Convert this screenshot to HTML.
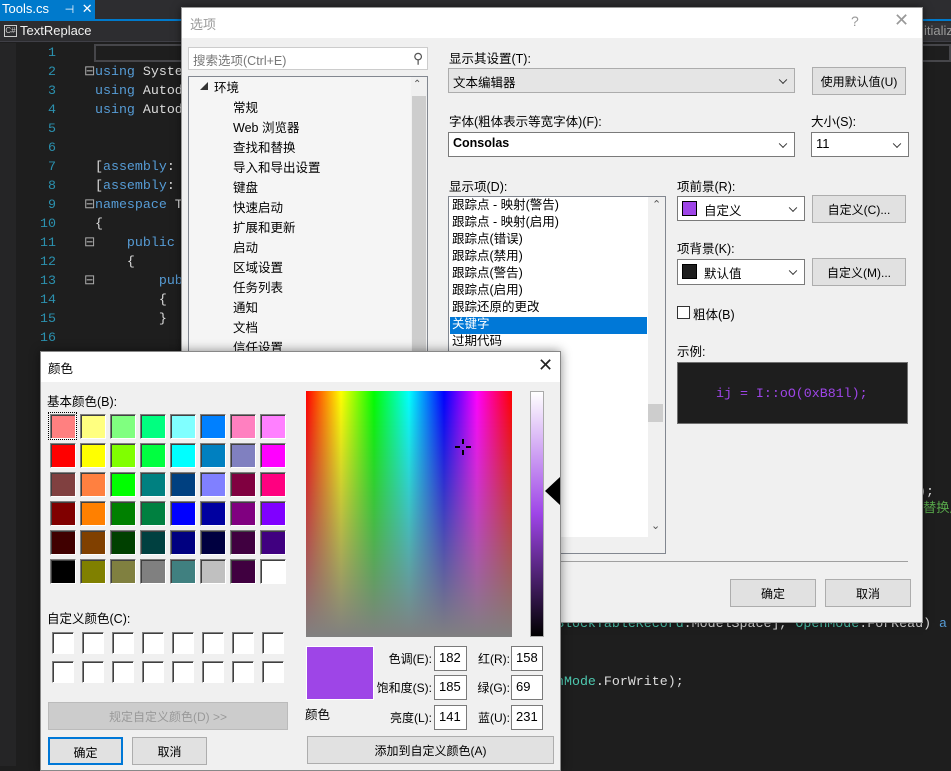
<!DOCTYPE html>
<html><head><meta charset="utf-8">
<style>
*{margin:0;padding:0;box-sizing:border-box}
body{width:951px;height:766px;overflow:hidden;background:#1e1e1e;position:relative;font-family:"Liberation Sans","Noto Sans CJK SC",sans-serif;font-size:12px;color:#000}
.a{position:absolute;white-space:nowrap}
.code{font-family:"Liberation Mono","Noto Sans CJK SC",monospace;font-size:13.3px;color:#dcdcdc;line-height:19px;white-space:pre}
.ln{color:#2b91af;text-align:right;width:40px;left:16px}
.kw{color:#569cd6}.ty{color:#4ec9b0}.gr{color:#57a64a}
.btn{position:absolute;background:#e1e1e1;border:1px solid #adadad;text-align:center;font-size:12px}
.cb{position:absolute;background:#fff;border:1px solid #7a7a7a}
.chev{position:absolute;right:8px;top:50%;width:6px;height:6px;border-right:1px solid #333;border-bottom:1px solid #333;transform:translateY(-70%) rotate(45deg)}
.sw{position:absolute;width:26px;height:25px;border:1px solid #fff;border-top-color:#808080;border-left-color:#808080;box-shadow:inset 1px 1px 0 #404040}
.lab{position:absolute;text-align:right;font-size:12px}
.inp{position:absolute;background:#fff;border:1px solid #7a7a7a;width:33px;height:25px;font-size:13px;padding:3px 0 0 4px}
</style></head><body>
<div class="a" style="left:0;top:0;width:951px;height:20px;background:#2d2d30"></div>
<div class="a" style="left:0;top:0;width:95px;height:20px;background:#007acc;color:#fff;font-size:13px;padding:1px 0 0 2px">Tools.cs <span style="margin-left:12px;font-size:11px">⊣</span> <span style="margin-left:4px">✕</span></div>
<div class="a" style="left:0;top:19px;width:951px;height:2px;background:#007acc"></div>
<div class="a" style="left:0;top:21px;width:951px;height:21px;background:#2d2d30;border-bottom:1px solid #3f3f46"></div>
<div class="a" style="left:4px;top:25px;width:13px;height:12px;border:1px solid #ccc;font-size:8px;color:#ccc;line-height:10px;text-align:center">C#</div>
<div class="a" style="left:20px;top:23px;color:#f1f1f1;font-size:13px">TextReplace</div>
<div class="a" style="left:900px;top:23px;width:51px;height:18px;background:#333337;color:#999;font-size:13px;padding-left:24px">itializ</div>
<div class="a" style="left:0;top:43px;width:16px;height:723px;background:#252526"></div>
<div class="a" style="left:94px;top:44px;width:857px;height:18px;border:2px solid #46464a"></div>
<div class="a code ln" style="top:43px">1
2
3
4
5
6
7
8
9
10
11
12
13
14
15
16</div>
<div class="a code" style="left:84px;top:43px;color:#aaa"> 
⊟






⊟

⊟

⊟</div>
<div class="a code" style="left:95px;top:43px"> 
<span class="kw">using</span> System
<span class="kw">using</span> Autod
<span class="kw">using</span> Autod


[<span class="kw">assembly</span>: 
[<span class="kw">assembly</span>: 
<span class="kw">namespace</span> T
{
    <span class="kw">public</span>
    {
        <span class="kw">pub</span>
        {
        }</div>
<div class="a code" style="left:918px;top:482px">);</div>
<div class="a code gr" style="left:923px;top:499px">替换后</div>
<div class="a code" style="left:556px;top:614px"><span class="ty">BlockTableRecord</span>.ModelSpace], <span class="ty">OpenMode</span>.ForRead) <span class="kw">a</span></div>
<div class="a code" style="left:556px;top:672px"><span class="ty">nMode</span>.ForWrite);</div>

<div class="a" style="left:181px;top:7px;width:742px;height:616px;background:#f0f0f0;border:1px solid #999;box-shadow:0 0 8px rgba(0,0,0,.5)"></div>
<div class="a" style="left:182px;top:8px;width:740px;height:30px;background:#fff"></div>
<div class="a" style="left:190px;top:14px;color:#999;font-size:13px">选项</div>
<div class="a" style="left:851px;top:13px;color:#999;font-size:14px">?</div>
<div class="a" style="left:894px;top:10px;color:#999;font-size:18px">✕</div>
<div class="a" style="left:188px;top:47px;width:240px;height:23px;background:#fff;border:1px solid #ccc;color:#777;padding:2px 0 0 4px;font-size:12.5px">搜索选项(Ctrl+E)</div>
<div class="a" style="left:413px;top:50px;font-size:14px;color:#555">⚲</div>
<div class="a" style="left:188px;top:76px;width:240px;height:290px;background:#f5f5f5;border:1px solid #828790"></div>
<div class="a" style="left:411px;top:77px;width:16px;height:290px;background:#f0f0f0"></div>
<div class="a" style="left:412px;top:96px;width:14px;height:270px;background:#cdcdcd"></div>
<div class="a" style="left:413px;top:79px;font-size:10px;color:#555">⌃</div>
<div class="a" style="left:200px;top:81px;font-size:8px;color:#333">◢</div>
<div class="a" style="left:214px;top:78px;font-size:12.5px;line-height:20px">环境</div>
<div class="a" style="left:233px;top:98px;font-size:12.5px;line-height:20px">常规<br>Web 浏览器<br>查找和替换<br>导入和导出设置<br>键盘<br>快速启动<br>扩展和更新<br>启动<br>区域设置<br>任务列表<br>通知<br>文档<br>信任设置</div>

<div class="a" style="left:449px;top:48px;font-size:12.5px">显示其设置(T):</div>
<div class="a" style="left:448px;top:68px;width:347px;height:25px;background:#e5e5e5;border:1px solid #acacac;padding:3px 0 0 4px;font-size:12.5px">文本编辑器<span class="chev"></span></div>
<div class="btn" style="left:812px;top:67px;width:94px;height:28px;padding-top:5px">使用默认值(U)</div>
<div class="a" style="left:449px;top:111px;font-size:12.5px">字体(粗体表示等宽字体)(F):</div>
<div class="cb" style="left:448px;top:132px;width:347px;height:25px;padding:3px 0 0 4px;font-weight:bold;font-size:12.5px">Consolas<span class="chev"></span></div>
<div class="a" style="left:811px;top:111px;font-size:12.5px">大小(S):</div>
<div class="cb" style="left:811px;top:132px;width:98px;height:25px;padding:3px 0 0 4px;font-size:13px">11<span class="chev"></span></div>

<div class="a" style="left:449px;top:176px;font-size:12.5px">显示项(D):</div>
<div class="a" style="left:448px;top:196px;width:218px;height:358px;background:#fff;border:1px solid #828790"></div>
<div class="a" style="left:648px;top:197px;width:17px;height:340px;background:#f0f0f0"></div>
<div class="a" style="left:648px;top:404px;width:15px;height:18px;background:#cdcdcd"></div>
<div class="a" style="left:449px;top:537px;width:216px;height:16px;background:#f0f0f0"></div>
<div class="a" style="left:652px;top:198px;font-size:11px;color:#555">⌃</div>
<div class="a" style="left:651px;top:519px;font-size:11px;color:#555">⌄</div>
<div class="a" style="left:450px;top:317px;width:197px;height:17px;background:#0078d7"></div>
<div class="a" style="left:452px;top:197px;font-size:12.5px;line-height:17px">跟踪点 - 映射(警告)<br>跟踪点 - 映射(启用)<br>跟踪点(错误)<br>跟踪点(禁用)<br>跟踪点(警告)<br>跟踪点(启用)<br>跟踪还原的更改<br><span style="color:#fff">关键字</span><br>过期代码<br>命名空间命名空间<br>命名空间命名空间<br><br><br>大纲轮廓指示器<br>大纲轮廓指示器</div>

<div class="a" style="left:677px;top:176px;font-size:12.5px">项前景(R):</div>
<div class="cb" style="left:677px;top:196px;width:128px;height:25px;padding:3px 0 0 26px;font-size:12.5px">自定义<span class="chev"></span></div>
<div class="a" style="left:682px;top:201px;width:15px;height:15px;background:#9e45e7;border:1px solid #000"></div>
<div class="btn" style="left:812px;top:195px;width:94px;height:28px;padding-top:5px">自定义(C)...</div>
<div class="a" style="left:677px;top:238px;font-size:12.5px">项背景(K):</div>
<div class="cb" style="left:677px;top:259px;width:128px;height:26px;padding:3px 0 0 26px;font-size:12.5px">默认值<span class="chev"></span></div>
<div class="a" style="left:682px;top:264px;width:15px;height:15px;background:#1e1e1e;border:1px solid #000"></div>
<div class="btn" style="left:812px;top:258px;width:94px;height:28px;padding-top:5px">自定义(M)...</div>
<div class="a" style="left:677px;top:306px;width:13px;height:13px;background:#fff;border:1px solid #333"></div>
<div class="a" style="left:693px;top:304px;font-size:12.5px">粗体(B)</div>
<div class="a" style="left:677px;top:341px;font-size:12.5px">示例:</div>
<div class="a" style="left:677px;top:362px;width:231px;height:62px;background:#1e1e1e;border:1px solid #707070"></div>
<div class="a code" style="left:716px;top:384px;color:#9e45e7">ij = I::oO(0xB81l);</div>
<div class="a" style="left:560px;top:561px;width:348px;height:1px;background:#a0a0a0"></div>
<div class="btn" style="left:730px;top:579px;width:86px;height:28px;padding-top:5px">确定</div>
<div class="btn" style="left:825px;top:579px;width:86px;height:28px;padding-top:5px">取消</div>

<div class="a" style="left:40px;top:351px;width:521px;height:420px;background:#f0f0f0;border:1px solid #888;box-shadow:0 0 10px rgba(0,0,0,.45)"></div>
<div class="a" style="left:41px;top:352px;width:519px;height:30px;background:#fff"></div>
<div class="a" style="left:48px;top:358px;font-size:12.5px">颜色</div>
<div class="a" style="left:538px;top:355px;font-size:18px;color:#222">✕</div>
<div class="a" style="left:47px;top:391px;font-size:12.5px">基本颜色(B):</div>
<div id="grid"></div>
<div class="a" style="left:48px;top:412px;width:29px;height:28px;border:1px dotted #000"></div>
<div class="a" style="left:47px;top:608px;font-size:12.5px">自定义颜色(C):</div>
<div class="btn" style="left:48px;top:702px;width:240px;height:28px;padding-top:5px;color:#999;background:#ccc;border-color:#bbb">规定自定义颜色(D) &gt;&gt;</div>
<div class="btn" style="left:48px;top:737px;width:75px;height:28px;padding-top:5px;border:2px solid #0078d7">确定</div>
<div class="btn" style="left:132px;top:737px;width:75px;height:28px;padding-top:5px">取消</div>
<div class="a" style="left:306px;top:391px;width:206px;height:246px;background:linear-gradient(to bottom,rgba(128,128,128,0),#808080),linear-gradient(to right,#f00,#ff0 17%,#0f0 33%,#0ff 50%,#00f 67%,#f0f 83%,#f00)"></div>
<svg class="a" style="left:452px;top:436px" width="22" height="22"><g fill="#000"><rect x="10" y="3" width="2" height="5"/><rect x="10" y="14" width="2" height="5"/><rect x="3" y="10" width="5" height="2"/><rect x="14" y="10" width="5" height="2"/></g></svg>
<div class="a" style="left:530px;top:391px;width:14px;height:246px;border:1px solid #aaa;background:linear-gradient(#fff,#9e45e7 50%,#000)"></div>
<svg class="a" style="left:545px;top:477px" width="16" height="28"><polygon points="15,0 15,28 0,14" fill="#000"/></svg>
<div class="a" style="left:306px;top:646px;width:68px;height:54px;background:#9e45e7;border:1px solid #fff"></div>
<div class="a" style="left:305px;top:704px;font-size:12.5px">颜色</div>
<div class="lab" style="left:360px;width:72px;top:650px">色调(E):</div>
<div class="lab" style="left:360px;width:72px;top:679px">饱和度(S):</div>
<div class="lab" style="left:360px;width:72px;top:709px">亮度(L):</div>
<div class="inp" style="left:434px;top:646px">182</div>
<div class="inp" style="left:434px;top:675px">185</div>
<div class="inp" style="left:434px;top:705px">141</div>
<div class="lab" style="left:468px;width:42px;top:650px">红(R):</div>
<div class="lab" style="left:468px;width:42px;top:679px">绿(G):</div>
<div class="lab" style="left:468px;width:42px;top:709px">蓝(U):</div>
<div class="inp" style="left:511px;top:646px;width:32px">158</div>
<div class="inp" style="left:511px;top:675px;width:32px">69</div>
<div class="inp" style="left:511px;top:705px;width:32px">231</div>
<div class="btn" style="left:307px;top:736px;width:247px;height:28px;padding-top:5px">添加到自定义颜色(A)</div>
<script>
var c=[["#ff8080","#ffff80","#80ff80","#00ff80","#80ffff","#0080ff","#ff80c0","#ff80ff"],
["#ff0000","#ffff00","#80ff00","#00ff40","#00ffff","#0080c0","#8080c0","#ff00ff"],
["#804040","#ff8040","#00ff00","#008080","#004080","#8080ff","#800040","#ff0080"],
["#800000","#ff8000","#008000","#008040","#0000ff","#0000a0","#800080","#8000ff"],
["#400000","#804000","#004000","#004040","#000080","#000040","#400040","#400080"],
["#000000","#808000","#808040","#808080","#408080","#c0c0c0","#400040","#ffffff"]];
var h="";
for(var r=0;r<6;r++)for(var k=0;k<8;k++)h+='<div class="sw" style="left:'+(50+k*30)+'px;top:'+(414+r*29)+'px;background:'+c[r][k]+'"></div>';
for(var r=0;r<2;r++)for(var k=0;k<8;k++)h+='<div class="sw" style="left:'+(52+k*30)+'px;top:'+(632+r*29)+'px;background:#fff;width:22px;height:22px"></div>';
document.getElementById("grid").innerHTML=h;
</script>
</body></html>
